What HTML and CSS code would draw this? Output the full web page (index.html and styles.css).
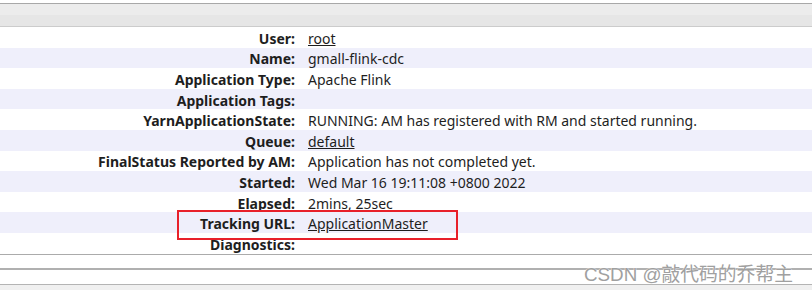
FILE: index.html
```html
<!DOCTYPE html>
<html lang="en">
<head>
  <meta charset="UTF-8">
  <title>Application Overview</title>
  <link rel="stylesheet" href="styles.css">
</head>
<body>
  <div class="page">
    <div class="toolbar"></div>

    <table class="info">
      <tr><th>User:</th><td><a href="#">root</a></td></tr>
      <tr class="odd"><th>Name:</th><td>gmall-flink-cdc</td></tr>
      <tr><th>Application Type:</th><td>Apache Flink</td></tr>
      <tr class="odd"><th>Application Tags:</th><td></td></tr>
      <tr><th>YarnApplicationState:</th><td>RUNNING: AM has registered with RM and started running.</td></tr>
      <tr class="odd"><th>Queue:</th><td><a href="#">default</a></td></tr>
      <tr><th>FinalStatus Reported by AM:</th><td>Application has not completed yet.</td></tr>
      <tr class="odd"><th>Started:</th><td>Wed Mar 16 19:11:08 +0800 2022</td></tr>
      <tr><th>Elapsed:</th><td>2mins, 25sec</td></tr>
      <tr class="odd"><th>Tracking URL:</th><td><a href="#">ApplicationMaster</a></td></tr>
      <tr><th>Diagnostics:</th><td></td></tr>
    </table>

    <div class="footer">
      <div class="gap"></div>
      <div class="gap"></div>
      <div class="rest"></div>
    </div>

    <!-- annotation box drawn over the Tracking URL row -->
    <div class="mark"></div>
    <div class="watermark">CSDN @敲代码的乔帮主</div>
  </div>
</body>
</html>
```

FILE: styles.css
```css
* {
  box-sizing: border-box;
  margin: 0;
  padding: 0;
}

body {
  font-family: 'Noto Sans', 'Open Sans', sans-serif;
  font-size: 14px;
  color: #1e1e1e;
  background: #ffffff;
}

.page {
  position: relative;
  width: 812px;
  height: 290px;
  overflow: hidden;
  padding-top: 3px;
}

.toolbar {
  height: 24px;
  border-top: 1px solid #a8a8a8;
  border-bottom: 1px solid #cccccc;
  background: linear-gradient(#ececec 50%, #e6e6e6 50%);
}

.info {
  width: 100%;
  border-collapse: collapse;
  line-height: 16px;
}

.info tr {
  height: 20.6px;
}

.info tr.odd {
  background: #efeffb;
}

.info th,
.info td {
  padding-top: 3px;
}

.info th {
  width: 295px;
  text-align: right;
  font-weight: 700;
  white-space: nowrap;
}

.info td {
  padding-left: 13px;
  white-space: nowrap;
}

.info a {
  color: #1e1e1e;
  text-decoration: underline;
}

.mark {
  position: absolute;
  left: 177px;
  top: 210px;
  width: 281px;
  height: 30px;
  border: 2px solid #e8202a;
}

.footer .gap {
  height: 14px;
  border-top: 1px solid #ababab;
}

.footer .gap + .gap {
  border-top: 2px solid #b0b0b0;
  height: 16px;
}

.footer .rest {
  height: 10px;
  border-top: 1px solid #b4b4b4;
  background: #f0f0f0;
}

.watermark {
  position: absolute;
  left: 584px;
  top: 259px;
  font-family: 'Liberation Sans', 'Noto Sans CJK SC', sans-serif;
  font-size: 18.8px;
  color: #a0a0a0;
  text-shadow: 0 0 1px #ffffff, 0 0 1px #ffffff;
}
```
